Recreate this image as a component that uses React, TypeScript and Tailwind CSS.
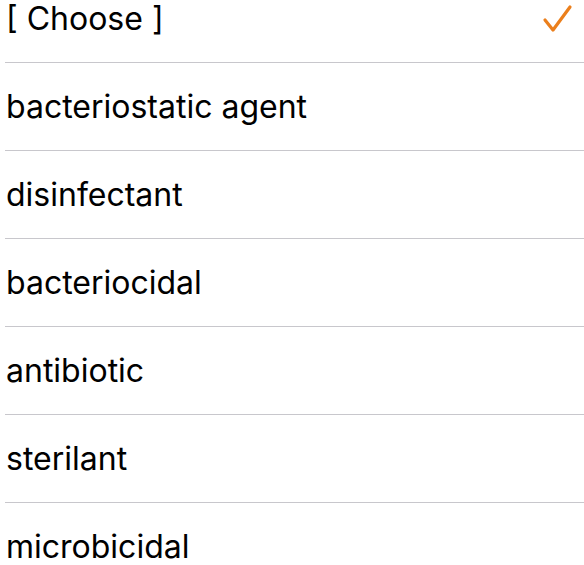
const options = [
  '[ Choose ]',
  'bacteriostatic agent',
  'disinfectant',
  'bacteriocidal',
  'antibiotic',
  'sterilant',
  'microbicidal',
]

const Check = () => (
  <svg width="32" height="32" viewBox="0 0 32 32" fill="none">
    <path
      d="M3 17 L11 27 L28 4"
      stroke="#eb7f1c"
      strokeWidth="3.2"
      strokeLinecap="round"
      strokeLinejoin="round"
    />
  </svg>
)

export default function App() {
  return (
    <div className="w-[584px] h-[565px] overflow-hidden bg-white" style={{ fontFamily: 'Inter, "Noto Sans", sans-serif' }}>
      <ul className="-mt-[25px]">
        {options.map((opt, i) => (
          <li key={opt}>
            <div className="h-[87px] flex items-center justify-between pl-[6px] pr-[10px]">
              <span className="text-[32px] leading-none text-black">{opt}</span>
              {i === 0 && <Check />}
            </div>
            <div className="ml-[5px] h-px bg-[#c8c7cc]" />
          </li>
        ))}
      </ul>
    </div>
  )
}
